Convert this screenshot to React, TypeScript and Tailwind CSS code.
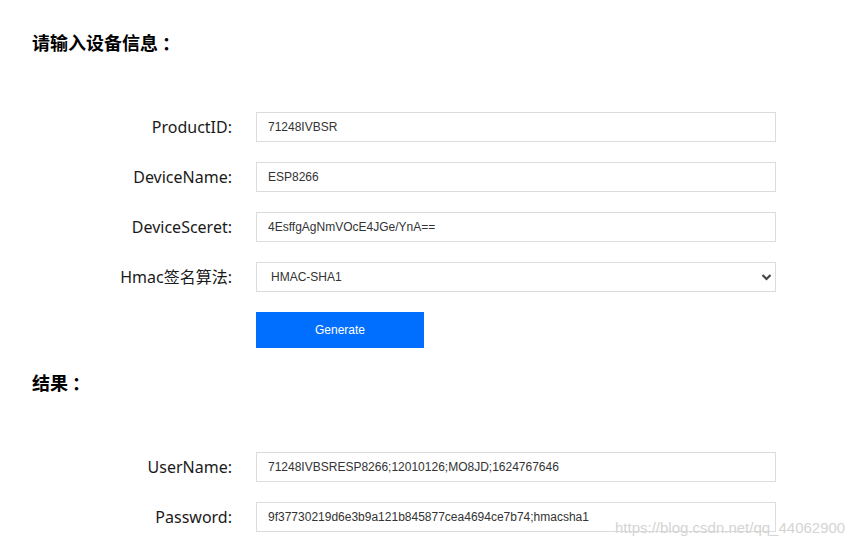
import React, { useState } from 'react';

interface FieldProps {
  label: string;
  value: string;
}

const labelCls =
  "w-[256px] shrink-0 pr-[24px] text-right text-[16px] text-[#1a1a1a] font-['Noto_Sans','Noto_Sans_CJK_SC',sans-serif]";

const Field: React.FC<FieldProps> = ({ label, value }) => (
  <div className="flex items-center h-[30px]">
    <label className={labelCls}>{label}</label>
    <input
      readOnly
      value={value}
      className="w-[520px] h-[30px] border border-[#dcdcdc] px-[11px] text-[12px] text-[#333] font-['Liberation_Sans',Arial,sans-serif] outline-none"
    />
  </div>
);

export default function App() {
  const [algo, setAlgo] = useState('HMAC-SHA1');

  return (
    <div className="relative w-[867px] h-[549px] bg-white overflow-hidden">
      <h2 className="pl-[32px] pt-[29px] text-[18px] font-bold text-black font-['Noto_Sans_CJK_SC',sans-serif] leading-[26px]">
        请输入设备信息 ：
      </h2>
      <div className="mt-[57px] flex flex-col gap-[20px]">
        <Field label="ProductID:" value="71248IVBSR" />
        <Field label="DeviceName:" value="ESP8266" />
        <Field label="DeviceSceret:" value="4EsffgAgNmVOcE4JGe/YnA==" />
        <div className="flex items-center h-[30px]">
          <label className={labelCls}>Hmac签名算法:</label>
          <div className="relative w-[520px] h-[30px]">
            <select
              value={algo}
              onChange={(e) => setAlgo(e.target.value)}
              className="appearance-none w-full h-full border border-[#dcdcdc] bg-white pl-[14px] text-[12px] text-[#333] font-['Liberation_Sans',Arial,sans-serif] outline-none"
            >
              <option>HMAC-SHA1</option>
              <option>HMAC-SHA256</option>
            </select>
            <svg
              className="absolute right-[4px] top-[11px] pointer-events-none"
              width="11"
              height="8"
              viewBox="0 0 11 8"
            >
              <path d="M1.5 2 L5.5 6 L9.5 2" stroke="#444" strokeWidth="2.2" fill="none" />
            </svg>
          </div>
        </div>
        <div className="flex">
          <div className="w-[256px]" />
          <button className="w-[168px] h-[36px] bg-[#006eff] text-white text-[12px] font-['Liberation_Sans',Arial,sans-serif]">
            Generate
          </button>
        </div>
      </div>
      <h2 className="pl-[32px] mt-[21px] text-[18px] font-bold text-black font-['Noto_Sans_CJK_SC',sans-serif] leading-[26px]">
        结果 ：
      </h2>
      <div className="mt-[57px] flex flex-col gap-[20px]">
        <Field label="UserName:" value="71248IVBSRESP8266;12010126;MO8JD;1624767646" />
        <Field label="Password:" value="9f37730219d6e3b9a121b845877cea4694ce7b74;hmacsha1" />
      </div>
      <div className="absolute left-[615px] top-[517px] text-[15px] text-[#d4d4d4] font-['Liberation_Sans',Arial,sans-serif] pointer-events-none">
        https://blog.csdn.net/qq_44062900
      </div>
    </div>
  );
}
